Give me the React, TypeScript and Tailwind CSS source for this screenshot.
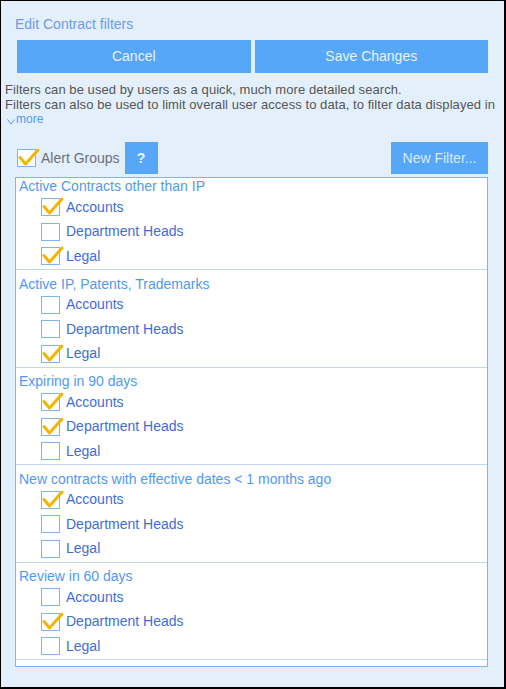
import React from "react";

interface Filter {
  title: string;
  groups: { name: string; checked: boolean }[];
}

const filters: Filter[] = [
  {
    title: "Active Contracts other than IP",
    groups: [
      { name: "Accounts", checked: true },
      { name: "Department Heads", checked: false },
      { name: "Legal", checked: true },
    ],
  },
  {
    title: "Active IP, Patents, Trademarks",
    groups: [
      { name: "Accounts", checked: false },
      { name: "Department Heads", checked: false },
      { name: "Legal", checked: true },
    ],
  },
  {
    title: "Expiring in 90 days",
    groups: [
      { name: "Accounts", checked: true },
      { name: "Department Heads", checked: true },
      { name: "Legal", checked: false },
    ],
  },
  {
    title: "New contracts with effective dates < 1 months ago",
    groups: [
      { name: "Accounts", checked: true },
      { name: "Department Heads", checked: false },
      { name: "Legal", checked: false },
    ],
  },
  {
    title: "Review in 60 days",
    groups: [
      { name: "Accounts", checked: false },
      { name: "Department Heads", checked: true },
      { name: "Legal", checked: false },
    ],
  },
];

function CheckBox({ checked }: { checked: boolean }) {
  return (
    <div className="relative w-[19px] h-[18px] shrink-0 border border-[#7fb5ee] bg-white">
      {checked && (
        <svg
          className="absolute left-[-1px] top-[-3px]"
          width="24"
          height="22"
          viewBox="0 0 24 22"
        >
          <path
            d="M3 10.5 L8.5 17 L21 3"
            fill="none"
            stroke="#f4b400"
            strokeWidth="3"
            strokeLinecap="round"
            strokeLinejoin="round"
          />
        </svg>
      )}
    </div>
  );
}

export default function App() {
  return (
    <div className="w-[506px] h-[689px] overflow-hidden bg-[#e3f0fc] border-t border-l border-r-2 border-b-2 border-black font-['Liberation_Sans',Arial,sans-serif]">
      {/* Title */}
      <div className="mt-[14px] h-[18px] pl-[14px] text-[14px] leading-[18px] text-[#6f9be6]">
        Edit Contract filters
      </div>

      {/* Actions */}
      <div className="mt-[7px] flex gap-[4px] px-[16px]">
        <button className="h-[33px] flex-1 bg-[#56a7f7] text-[14px] text-[#e8f2fd]">
          Cancel
        </button>
        <button className="h-[33px] flex-1 bg-[#56a7f7] text-[14px] text-[#e8f2fd]">
          Save Changes
        </button>
      </div>

      {/* Description */}
      <div className="mt-[9px] pl-[4px] text-[13px] leading-[15px] tracking-[0.065px] text-[#555555] whitespace-nowrap">
        <p>Filters can be used by users as a quick, much more detailed search.</p>
        <p>Filters can also be used to limit overall user access to data, to filter data displayed in</p>
        <div className="flex items-center h-[15px] text-[12px] tracking-normal text-[#4f9af0]">
          <svg className="ml-[2px] mt-[4px]" width="8" height="6" viewBox="0 0 8 6">
            <polyline points="0.5,0.5 4,5 7.5,0.5" fill="none" stroke="#4f9af0" strokeWidth="1" />
          </svg>
          <span className="ml-[1px]">more</span>
        </div>
      </div>

      {/* Alert groups row */}
      <div className="mt-[15px] flex h-[32px] items-center pl-[16px] pr-[16px]">
        <CheckBox checked />
        <span className="ml-[5px] text-[14px] text-[#6b6f78]">Alert Groups</span>
        <button className="ml-[5px] h-[32px] w-[33px] bg-[#56a7f7] text-[14px] font-bold text-[#eef5fd]">
          ?
        </button>
        <button className="ml-auto h-[32px] w-[97px] bg-[#56a7f7] text-[14px] text-[#dbeafc]">
          New Filter...
        </button>
      </div>

      {/* Filters list */}
      <div className="mt-[3px] ml-[14px] mr-[16px] border border-[#7db5ef] bg-white">
        {filters.map((f) => (
          <div key={f.title} className="mb-[5.5px] border-b border-[#bfd8f3] pb-[0.5px]">
            <div className="h-[17px] pl-[3px] text-[14px] leading-[16px] text-[#4f9af0]">
              {f.title}
            </div>
            {f.groups.map((g) => (
              <div key={g.name} className="flex h-[24.5px] items-center pl-[25px]">
                <CheckBox checked={g.checked} />
                <span className="ml-[6px] text-[14px] text-[#3f6dd6]">{g.name}</span>
              </div>
            ))}
          </div>
        ))}
      </div>
    </div>
  );
}
